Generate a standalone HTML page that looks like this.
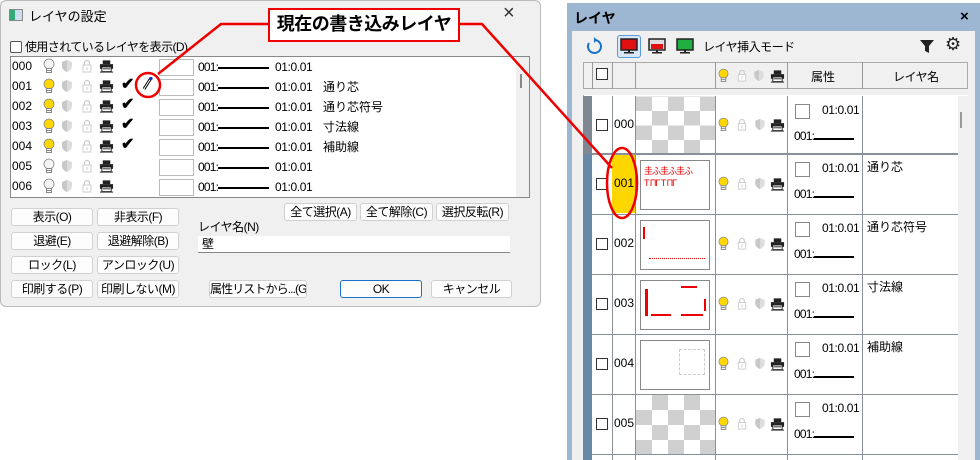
<!DOCTYPE html><html><head><meta charset="utf-8"><style>
*{box-sizing:border-box;margin:0;padding:0}
body{width:980px;height:460px;background:#fff;position:relative;overflow:hidden;font-family:"Liberation Sans","Noto Sans CJK JP",sans-serif;font-size:12px;color:#000}
.a{position:absolute;white-space:nowrap}
.btn{position:absolute;background:#fdfdfd;border:1px solid #d0d0d0;border-radius:3px;text-align:center;font-size:12px;line-height:16px;white-space:nowrap;letter-spacing:-0.5px;overflow:hidden}
.cb{position:absolute;width:12px;height:12px;border:1px solid #333;background:#fff}
.rt{font-size:12px}
svg.i{position:absolute}
</style></head><body>
<svg width="0" height="0" style="position:absolute"><defs>
<symbol id="bulb" viewBox="0 0 12 16"><circle cx="6" cy="6" r="5" fill="currentColor" stroke="#888" stroke-width=".8"/><rect x="3.5" y="10.5" width="5" height="4" fill="#fff" stroke="#888"/><line x1="3.5" y1="12.5" x2="8.5" y2="12.5" stroke="#888"/></symbol>
<symbol id="shield" viewBox="0 0 12 14"><path d="M6 1 L11 3 L11 7 Q11 11 6 13 Q1 11 1 7 L1 3Z" fill="#ddd"/><path d="M6 1 L6 13 Q1 11 1 7 L1 3Z" fill="#c8c8c8"/></symbol>
<symbol id="lock" viewBox="0 0 10 14"><path d="M2.5 6V4a2.5 2.5 0 0 1 5 0v2" fill="none" stroke="#ccc" stroke-width="1.2"/><rect x="1" y="6" width="8" height="7" fill="#fff" stroke="#ccc"/><line x1="5" y1="8" x2="5" y2="11" stroke="#ccc"/></symbol>
<symbol id="prn" viewBox="0 0 16 14"><rect x="4" y="1" width="8" height="4" fill="#222"/><rect x="1" y="5" width="14" height="5" fill="#222"/><rect x="3" y="8" width="10" height="5" fill="#fff" stroke="#222"/><line x1="4" y1="10" x2="12" y2="10" stroke="#222"/><line x1="1" y1="13.5" x2="15" y2="13.5" stroke="#222"/></symbol>
</defs></svg>

<!-- dialog -->
<div class="a" style="left:0;top:0;width:541px;height:307px;background:#f0f0f0;border:1px solid #bbb;border-radius:6px"></div>
<div class="a" style="left:9px;top:9px;width:14px;height:12px;border:1px solid #888;background:linear-gradient(90deg,#3a7 0 40%,#cde 40%)"></div>
<div class="a" style="left:29px;top:6px;font-size:13px">レイヤの設定</div>
<div class="a" style="left:503px;top:2px;font-size:20px;color:#333">×</div>
<div class="cb" style="left:10px;top:41px;width:12px;height:12px;border-color:#555;border-radius:2px"></div>
<div class="a" style="left:25px;top:38px;font-size:12px;letter-spacing:-0.6px">使用されているレイヤを表示(D)</div>
<div class="a" style="left:10px;top:56px;width:520px;height:142px;background:#fff;border:1px solid #888"></div>
<div class="a" style="left:516px;top:57px;width:13px;height:140px;background:#f0f0f0"></div>
<div class="a" style="left:520px;top:74px;width:2px;height:14px;background:#888"></div>

<div class="a" style="left:12px;top:57px">
<div class="a rt" style="top:2px">000</div><div class="a rt" style="top:22px">001</div><div class="a rt" style="top:42px">002</div><div class="a rt" style="top:62px">003</div><div class="a rt" style="top:82px">004</div><div class="a rt" style="top:102px">005</div><div class="a rt" style="top:122px">006</div>
</div>
<svg class="i" style="left:43px;top:58px;color:#f4f4f4" width="12" height="16"><use href="#bulb"/></svg>
<svg class="i" style="left:43px;top:78px;color:#ffd700" width="12" height="16"><use href="#bulb"/></svg>
<svg class="i" style="left:43px;top:98px;color:#ffd700" width="12" height="16"><use href="#bulb"/></svg>
<svg class="i" style="left:43px;top:118px;color:#ffd700" width="12" height="16"><use href="#bulb"/></svg>
<svg class="i" style="left:43px;top:138px;color:#ffd700" width="12" height="16"><use href="#bulb"/></svg>
<svg class="i" style="left:43px;top:158px;color:#f4f4f4" width="12" height="16"><use href="#bulb"/></svg>
<svg class="i" style="left:43px;top:178px;color:#f4f4f4" width="12" height="16"><use href="#bulb"/></svg>

<div class="a" style="left:61px;top:59px">
<svg class="i" style="top:0" width="12" height="14"><use href="#shield"/></svg><svg class="i" style="top:20px" width="12" height="14"><use href="#shield"/></svg><svg class="i" style="top:40px" width="12" height="14"><use href="#shield"/></svg><svg class="i" style="top:60px" width="12" height="14"><use href="#shield"/></svg><svg class="i" style="top:80px" width="12" height="14"><use href="#shield"/></svg><svg class="i" style="top:100px" width="12" height="14"><use href="#shield"/></svg><svg class="i" style="top:120px" width="12" height="14"><use href="#shield"/></svg>
</div>
<div class="a" style="left:82px;top:59px">
<svg class="i" style="top:0" width="10" height="14"><use href="#lock"/></svg><svg class="i" style="top:20px" width="10" height="14"><use href="#lock"/></svg><svg class="i" style="top:40px" width="10" height="14"><use href="#lock"/></svg><svg class="i" style="top:60px" width="10" height="14"><use href="#lock"/></svg><svg class="i" style="top:80px" width="10" height="14"><use href="#lock"/></svg><svg class="i" style="top:100px" width="10" height="14"><use href="#lock"/></svg><svg class="i" style="top:120px" width="10" height="14"><use href="#lock"/></svg>
</div>
<div class="a" style="left:99px;top:59px">
<svg class="i" style="top:0" width="15" height="14"><use href="#prn"/></svg><svg class="i" style="top:20px" width="15" height="14"><use href="#prn"/></svg><svg class="i" style="top:40px" width="15" height="14"><use href="#prn"/></svg><svg class="i" style="top:60px" width="15" height="14"><use href="#prn"/></svg><svg class="i" style="top:80px" width="15" height="14"><use href="#prn"/></svg><svg class="i" style="top:100px" width="15" height="14"><use href="#prn"/></svg><svg class="i" style="top:120px" width="15" height="14"><use href="#prn"/></svg>
</div>
<div class="a" style="left:121px;top:75px;font-size:16px;font-weight:bold;line-height:20px">✔<br>✔<br>✔<br>✔</div>
<svg class="i" style="left:140px;top:76px" width="14" height="16"><path d="M11 2 L4 13" stroke="#000" stroke-width="3"/><path d="M11 2 L4 13" stroke="#fff" stroke-width="1"/><circle cx="11" cy="2.5" r="1.6" fill="#1030c0"/></svg>
<div class="a" style="left:159px;top:59px">
<div class="a" style="top:0;width:35px;height:17px;border:1px solid #bbb;background:#fff"></div><div class="a" style="top:20px;width:35px;height:17px;border:1px solid #bbb;background:#fff"></div><div class="a" style="top:40px;width:35px;height:17px;border:1px solid #bbb;background:#fff"></div><div class="a" style="top:60px;width:35px;height:17px;border:1px solid #bbb;background:#fff"></div><div class="a" style="top:80px;width:35px;height:17px;border:1px solid #bbb;background:#fff"></div><div class="a" style="top:100px;width:35px;height:17px;border:1px solid #bbb;background:#fff"></div><div class="a" style="top:120px;width:35px;height:17px;border:1px solid #bbb;background:#fff"></div>
</div>
<div class="a" style="left:198px;top:57px;line-height:20px;letter-spacing:-0.8px">001:<br>001:<br>001:<br>001:<br>001:<br>001:<br>001:</div>
<div class="a" style="left:218px;top:57px">
<div class="a" style="top:10px;width:51px;height:2px;background:#000"></div><div class="a" style="top:30px;width:51px;height:2px;background:#000"></div><div class="a" style="top:50px;width:51px;height:2px;background:#000"></div><div class="a" style="top:70px;width:51px;height:2px;background:#000"></div><div class="a" style="top:90px;width:51px;height:2px;background:#000"></div><div class="a" style="top:110px;width:51px;height:2px;background:#000"></div><div class="a" style="top:130px;width:51px;height:2px;background:#000"></div>
</div>
<div class="a" style="left:275px;top:57px;line-height:20px;letter-spacing:-0.4px">01:0.01<br>01:0.01<br>01:0.01<br>01:0.01<br>01:0.01<br>01:0.01<br>01:0.01</div>
<div class="a" style="left:323px;top:77px;line-height:20px">通り芯<br>通り芯符号<br>寸法線<br>補助線</div>

<div class="btn" style="left:11px;top:208px;width:82px;height:18px">表示(O)</div>
<div class="btn" style="left:97px;top:208px;width:82px;height:18px">非表示(F)</div>
<div class="btn" style="left:11px;top:232px;width:82px;height:18px">退避(E)</div>
<div class="btn" style="left:97px;top:232px;width:82px;height:18px">退避解除(B)</div>
<div class="btn" style="left:11px;top:256px;width:82px;height:18px">ロック(L)</div>
<div class="btn" style="left:97px;top:256px;width:82px;height:18px">アンロック(U)</div>
<div class="btn" style="left:11px;top:280px;width:82px;height:18px">印刷する(P)</div>
<div class="btn" style="left:97px;top:280px;width:82px;height:18px">印刷しない(M)</div>
<div class="btn" style="left:284px;top:203px;width:73px;height:18px">全て選択(A)</div>
<div class="btn" style="left:360px;top:203px;width:73px;height:18px">全て解除(C)</div>
<div class="btn" style="left:436px;top:203px;width:73px;height:18px">選択反転(R)</div>
<div class="a" style="left:198px;top:218px;letter-spacing:-0.5px">レイヤ名(N)</div>
<div class="a" style="left:198px;top:236px;width:312px;height:17px;background:#fff;border-bottom:1px solid #888;padding-left:4px;line-height:16px">壁</div>
<div class="btn" style="left:209px;top:280px;width:98px;height:18px;letter-spacing:-0.9px">属性リストから...(G)</div>
<div class="btn" style="left:340px;top:280px;width:82px;height:18px;border-color:#1a6fc8">OK</div>
<div class="btn" style="left:431px;top:280px;width:81px;height:18px">キャンセル</div>

<!-- right panel -->
<div class="a" style="left:567px;top:3px;width:413px;height:457px;background:#f0f0f0;border-left:5px solid #9db6d2;border-right:5px solid #9db6d2"></div>
<div class="a" style="left:567px;top:3px;width:413px;height:28px;background:#9db6d2"></div>
<div class="a" style="left:574px;top:8px;font-size:14px;font-weight:bold">レイヤ</div>
<div class="a" style="left:960px;top:8px;font-size:15px;font-weight:bold">×</div>
<svg class="i" style="left:585px;top:37px" width="18" height="18"><path d="M4 6 A6.5 6.5 0 1 0 9 3" fill="none" stroke="#1a6fc8" stroke-width="2"/><path d="M9 0 L12 3 L9 6Z" fill="#1a6fc8"/></svg>
<div class="a" style="left:617px;top:35px;width:24px;height:23px;border:1px solid #5a9ad8;background:#d8e8f8;border-radius:3px"></div>
<svg class="i" style="left:620px;top:38px" width="18" height="16"><rect x="1" y="1" width="16" height="11" fill="#e01010" stroke="#222" stroke-width="1.5"/><rect x="8" y="12" width="2" height="2" fill="#222"/><rect x="4" y="14" width="10" height="1.5" fill="#222"/></svg>
<svg class="i" style="left:648px;top:38px" width="18" height="16"><rect x="1" y="1" width="16" height="11" fill="#ddd" stroke="#222" stroke-width="1.5"/><rect x="3" y="6" width="12" height="5" fill="#e01010"/><rect x="8" y="12" width="2" height="2" fill="#222"/><rect x="4" y="14" width="10" height="1.5" fill="#222"/></svg>
<svg class="i" style="left:676px;top:38px" width="18" height="16"><rect x="1" y="1" width="16" height="11" fill="#20b040" stroke="#222" stroke-width="1.5"/><rect x="8" y="12" width="2" height="2" fill="#222"/><rect x="4" y="14" width="10" height="1.5" fill="#222"/></svg>
<div class="a" style="left:703px;top:38px;letter-spacing:-0.5px">レイヤ挿入モード</div>
<svg class="i" style="left:919px;top:39px" width="16" height="15"><path d="M1 1H15L10 7V14L6 12V7Z" fill="#222"/></svg>
<div class="a" style="left:945px;top:34px;font-size:18px;color:#222">⚙</div>

<div class="a" style="left:583px;top:62px;width:385px;height:27px;background:#f0f0f0;border:1px solid #aaa"></div>
<div class="a" style="left:592px;top:62px;width:1px;height:27px;background:#999"></div>
<div class="a" style="left:612px;top:62px;width:1px;height:27px;background:#999"></div>
<div class="a" style="left:635px;top:62px;width:1px;height:27px;background:#999"></div>
<div class="a" style="left:715px;top:62px;width:1px;height:27px;background:#999"></div>
<div class="a" style="left:787px;top:62px;width:1px;height:27px;background:#999"></div>
<div class="a" style="left:862px;top:62px;width:1px;height:27px;background:#999"></div>
<div class="cb" style="left:596px;top:68px"></div>
<svg class="i" style="left:718px;top:68px;color:#ffd700" width="11" height="15"><use href="#bulb"/></svg>
<svg class="i" style="left:737px;top:69px" width="10" height="13"><use href="#lock"/></svg>
<svg class="i" style="left:753px;top:69px" width="12" height="13"><use href="#shield"/></svg>
<svg class="i" style="left:770px;top:69px" width="15" height="14"><use href="#prn"/></svg>
<div class="a" style="left:811px;top:68px">属性</div>
<div class="a" style="left:893px;top:68px;letter-spacing:-0.5px">レイヤ名</div>

<div class="a" style="left:583px;top:95px;width:385px;height:365px;background:#fff;border-left:1px solid #aaa"></div>
<div class="a" style="left:583px;top:96px;width:9px;height:58px;background:#7e8792"></div>
<div class="a" style="left:583px;top:154px;width:9px;height:306px;background:#6789a7"></div>
<div class="a" style="left:958px;top:96px;width:10px;height:364px;background:#f0f0f0"></div>
<div class="a" style="left:960px;top:112px;width:2px;height:16px;background:#999"></div>
<div class="a" style="left:612px;top:96px;width:1px;height:364px;background:#8a9099"></div>
<div class="a" style="left:635px;top:96px;width:1px;height:364px;background:#8a9099"></div>
<div class="a" style="left:715px;top:96px;width:1px;height:364px;background:#8a9099"></div>
<div class="a" style="left:787px;top:96px;width:1px;height:364px;background:#8a9099"></div>
<div class="a" style="left:862px;top:96px;width:1px;height:364px;background:#8a9099"></div>
<div id="rows"></div>
<div class="a" style="left:592px;top:153px;width:366px;height:2px;background:#8a9099"></div>
<div class="a" style="left:592px;top:214px;width:366px;height:1px;background:#8a9099"></div>
<div class="a" style="left:592px;top:274px;width:366px;height:1px;background:#8a9099"></div>
<div class="a" style="left:592px;top:334px;width:366px;height:1px;background:#8a9099"></div>
<div class="a" style="left:592px;top:394px;width:366px;height:1px;background:#8a9099"></div>
<div class="a" style="left:592px;top:454px;width:366px;height:1px;background:#8a9099"></div>

<div class="a" style="left:636px;top:96px;width:79px;height:57px;background-color:#fff;background-image:conic-gradient(#d0d0d0 25%,#fff 0 50%,#d0d0d0 0 75%,#fff 0);background-size:32px 29px;background-position:0 -14px"></div>
<div class="a" style="left:636px;top:395px;width:79px;height:59px;background-color:#fff;background-image:conic-gradient(#d0d0d0 25%,#fff 0 50%,#d0d0d0 0 75%,#fff 0);background-size:32px 30px"></div>
<div class="a" style="left:640px;top:160px;width:70px;height:50px;border:1px solid #888;background:#fff;color:#e00;font-size:9px;line-height:12px;padding:4px 3px;letter-spacing:-1px;overflow:hidden">圭ふ圭ふ圭ふ<br>T ΠΓ T ΠΓ</div>
<div class="a" style="left:640px;top:220px;width:70px;height:50px;border:1px solid #888;background:#fff"><div class="a" style="left:2px;top:6px;width:2px;height:12px;background:#e00"></div><div class="a" style="left:8px;top:37px;width:56px;height:1px;border-top:1px dotted #e00"></div></div>
<div class="a" style="left:640px;top:280px;width:70px;height:50px;border:1px solid #888;background:#fff"><div class="a" style="left:4px;top:8px;width:3px;height:27px;background:#e00"></div><div class="a" style="left:10px;top:33px;width:20px;height:2px;background:#e00"></div><div class="a" style="left:40px;top:33px;width:22px;height:2px;background:#e00"></div><div class="a" style="left:40px;top:5px;width:16px;height:2px;background:#e00"></div><div class="a" style="left:63px;top:18px;width:2px;height:12px;background:#e00"></div></div>
<div class="a" style="left:640px;top:340px;width:70px;height:50px;border:1px solid #888;background:#fff"><div class="a" style="left:38px;top:8px;width:26px;height:26px;border:1px dashed #ccc"></div></div>

<script>
var tops=[96,154,214,274,334,394],nums=['000','001','002','003','004','005'],h='';
tops.forEach(function(t,i){
 var c=t+(i==0?29:30);
 h+='<div class="cb" style="left:596px;top:'+(c-6)+'px"></div>';
 if(i!=1)h+='<div class="a" style="left:614px;top:'+(c-8)+'px">'+nums[i]+'</div>';
 h+='<svg class="i" style="left:718px;top:'+(c-8)+'px;color:#ffd700" width="11" height="15"><use href="#bulb"/></svg>';
 h+='<svg class="i" style="left:737px;top:'+(c-7)+'px" width="10" height="13"><use href="#lock"/></svg>';
 h+='<svg class="i" style="left:754px;top:'+(c-7)+'px" width="12" height="13"><use href="#shield"/></svg>';
 h+='<svg class="i" style="left:770px;top:'+(c-7)+'px" width="15" height="14"><use href="#prn"/></svg>';
 h+='<div class="a" style="left:795px;top:'+(t+8)+'px;width:15px;height:15px;border:1px solid #888;background:#fff"></div>';
 h+='<div class="a" style="left:822px;top:'+(t+7)+'px;letter-spacing:-0.4px">01:0.01</div>';
 h+='<div class="a" style="left:794px;top:'+(t+33)+'px;letter-spacing:-0.8px">001:</div>';
 h+='<div class="a" style="left:814px;top:'+(t+42)+'px;width:40px;height:2px;background:#000"></div>';
});
document.getElementById('rows').innerHTML=h;
</script>
<div class="a" style="left:612px;top:155px;width:23px;height:58px;background:#ffd700"></div>
<div class="a" style="left:614px;top:176px">001</div>
<div class="a" style="left:867px;top:158px">通り芯</div>
<div class="a" style="left:867px;top:218px">通り芯符号</div>
<div class="a" style="left:867px;top:278px">寸法線</div>
<div class="a" style="left:867px;top:338px">補助線</div>

<svg class="a" style="left:0;top:0" width="980" height="460">
<polyline points="268,24 221,24 158,74" fill="none" stroke="#e00" stroke-width="2.5"/>
<circle cx="148" cy="85" r="12" fill="none" stroke="#e00" stroke-width="2.5"/>
<polyline points="460,24 482,24 612,168" fill="none" stroke="#e00" stroke-width="2.5"/>
<ellipse cx="622" cy="183" rx="15" ry="35" fill="none" stroke="#e00" stroke-width="2.5"/>
</svg>
<div class="a" style="left:268px;top:8px;width:192px;height:34px;border:2.5px solid #e00;background:#fff;font-size:18px;font-weight:bold;text-align:center;line-height:29px;letter-spacing:-0.5px">現在の書き込みレイヤ</div>
</body></html>
